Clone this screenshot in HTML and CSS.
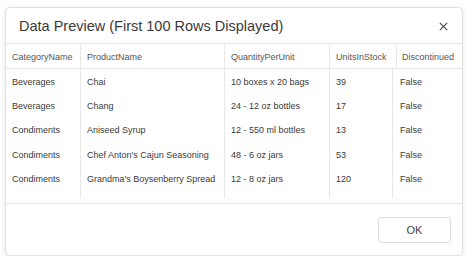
FILE: index.html
```html
<!DOCTYPE html>
<html lang="en">

<head>
    <meta charset="UTF-8">
    <meta name="viewport" content="width=device-width, initial-scale=1.0">
    <title>Data Preview</title>
    <link rel="stylesheet" href="styles.css">
</head>

<body>
    <div class="dialog">
        <div class="dialog-header">
            <span class="dialog-title">Data Preview (First 100 Rows Displayed)</span>
            <button class="close-button" aria-label="Close">
                <svg width="9" height="9" viewBox="0 0 9 9">
                    <path d="M0.8 0.8 L8.2 8.2 M8.2 0.8 L0.8 8.2" stroke="#444" stroke-width="1.1" fill="none" />
                </svg>
            </button>
        </div>

        <div class="grid">
            <table class="grid-head">
                <colgroup>
                    <col style="width: 75px">
                    <col style="width: 144px">
                    <col style="width: 105px">
                    <col style="width: 67px">
                    <col>
                </colgroup>
                <tr>
                    <th>CategoryName</th>
                    <th>ProductName</th>
                    <th>QuantityPerUnit</th>
                    <th>UnitsInStock</th>
                    <th>Discontinued</th>
                </tr>
            </table>
            <table class="grid-body">
                <colgroup>
                    <col style="width: 75px">
                    <col style="width: 144px">
                    <col style="width: 105px">
                    <col style="width: 63px">
                    <col>
                </colgroup>
                <tr>
                    <td>Beverages</td>
                    <td>Chai</td>
                    <td>10 boxes x 20 bags</td>
                    <td>39</td>
                    <td>False</td>
                </tr>
                <tr>
                    <td>Beverages</td>
                    <td>Chang</td>
                    <td>24 - 12 oz bottles</td>
                    <td>17</td>
                    <td>False</td>
                </tr>
                <tr>
                    <td>Condiments</td>
                    <td>Aniseed Syrup</td>
                    <td>12 - 550 ml bottles</td>
                    <td>13</td>
                    <td>False</td>
                </tr>
                <tr>
                    <td>Condiments</td>
                    <td>Chef Anton's Cajun Seasoning</td>
                    <td>48 - 6 oz jars</td>
                    <td>53</td>
                    <td>False</td>
                </tr>
                <tr class="last-row">
                    <td>Condiments</td>
                    <td>Grandma's Boysenberry Spread</td>
                    <td>12 - 8 oz jars</td>
                    <td>120</td>
                    <td>False</td>
                </tr>
            </table>
        </div>

        <div class="dialog-footer">
            <button class="ok-button">OK</button>
        </div>
    </div>
</body>

</html>
```

FILE: styles.css
```css
* {
    margin: 0;
    padding: 0;
    box-sizing: border-box;
}

body {
    font-family: 'Liberation Sans', Arial, sans-serif;
    background: #fff;
    color: #333;
}

.dialog {
    margin: 7px 0 0 5px;
    width: 458px;
    height: 249px;
    background: #fff;
    border: 1px solid #e2e2e2;
    border-radius: 5px;
    box-shadow: 0 1px 4px rgba(0, 0, 0, 0.12);
    display: flex;
    flex-direction: column;
}

.dialog-header {
    height: 36px;
    border-bottom: 1px solid #e6e6e6;
    display: flex;
    align-items: center;
    justify-content: space-between;
    padding: 1px 14px 0 13px;
}

.dialog-title {
    font-size: 14.5px;
    color: #3a3a3a;
}

.close-button {
    background: none;
    border: none;
    width: 9px;
    height: 9px;
    display: flex;
    cursor: pointer;
}

.grid {
    flex: 1;
}

table {
    width: 100%;
    table-layout: fixed;
    border-collapse: separate;
    border-spacing: 0;
    font-size: 9px;
}

th,
td {
    text-align: left;
    font-weight: normal;
    padding: 0 0 0 6px;
    white-space: nowrap;
    border-right: 1px solid #e8e8e8;
}

th:last-child,
td:last-child {
    border-right: none;
}

.grid-head th {
    height: 25px;
    padding-top: 1px;
    color: #555;
    border-bottom: 1px solid #e6e6e6;
}

.grid-head th:last-child {
    padding-left: 5px;
}

.grid-body td {
    height: 24.4px;
    padding-top: 1px;
    color: #3a3a3a;
}

.grid-body td:last-child {
    padding-left: 7px;
}

.grid-body .last-row td {
    height: 31px;
    padding-bottom: 7px;
}

.dialog-footer {
    height: 52px;
    border-top: 1px solid #e6e6e6;
    display: flex;
    justify-content: flex-end;
    align-items: flex-start;
    padding: 13px 11px 0 0;
}

.ok-button {
    width: 73px;
    height: 26px;
    background: #fff;
    border: 1px solid #dcdcdc;
    border-radius: 3px;
    font-family: inherit;
    font-size: 11px;
    color: #444;
    cursor: pointer;
}
```
